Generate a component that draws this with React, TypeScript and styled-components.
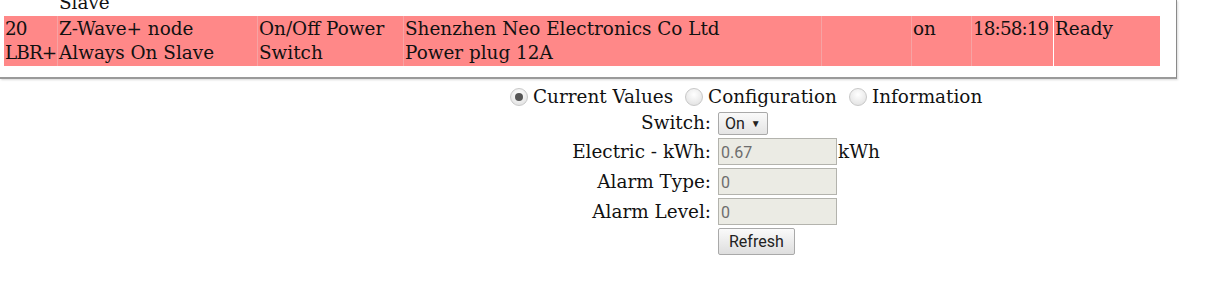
import React from 'react'
import styled, { createGlobalStyle } from 'styled-components'

const GlobalStyle = createGlobalStyle`
  html, body {
    margin: 0;
    padding: 0;
    background: #fff;
  }
  body {
    font-family: 'DejaVu Serif', serif;
    font-size: 18.4px;
    color: #111;
  }
`

const NodeBox = styled.div`
  width: 1177px;
  height: 79px;
  border-right: 1px solid #8a8a8a;
  border-bottom: 2px solid #9a9a9a;
  box-shadow: 1px 1px 2px rgba(0, 0, 0, 0.15);
  overflow: hidden;
  display: flex;
  flex-direction: column;
  justify-content: flex-end;
  padding: 0 16px 11px 3px;
  box-sizing: border-box;
`

const NodeTable = styled.table`
  border-collapse: collapse;
  width: 100%;
  table-layout: fixed;
  line-height: 24px;
`

const Row = styled.tr<{ $alert?: boolean }>`
  background: ${p => (p.$alert ? '#ff8888' : 'transparent')};
`

const Cell = styled.td<{ $w?: number; $line?: boolean; $tight?: boolean }>`
  width: ${p => (p.$w ? `${p.$w - 3}px` : 'auto')};
  padding: 1px 1px;
  vertical-align: top;
  white-space: nowrap;
  overflow: hidden;
  letter-spacing: ${p => (p.$tight ? '-0.9px' : 'normal')};
  border-left: 1px solid ${p => (p.$line ? '#f7a3a3' : 'transparent')};
`

const Panel = styled.div`
  padding: 6px 0 0 510px;
  display: flex;
  flex-direction: column;
`

const Tabs = styled.div`
  display: flex;
  align-items: center;
  gap: 12px;
  line-height: 24px;
  height: 24px;
`

const TabOption = styled.label`
  display: flex;
  align-items: center;
  gap: 5px;
`

const Radio = styled.span<{ $on?: boolean }>`
  width: 18px;
  height: 18px;
  border-radius: 50%;
  box-sizing: border-box;
  border: 1px solid #c8c8c8;
  background: radial-gradient(circle at 50% 35%, #ffffff 0%, #e4e4e4 80%);
  display: flex;
  align-items: center;
  justify-content: center;
  &::after {
    content: '';
    width: 8px;
    height: 8px;
    border-radius: 50%;
    background: ${p => (p.$on ? '#555' : 'transparent')};
  }
`

const FormGrid = styled.div`
  display: grid;
  grid-template-columns: 201px auto;
  column-gap: 7px;
  row-gap: 3px;
  margin-top: 2px;
  align-items: center;
`

const Label = styled.div`
  text-align: right;
  white-space: nowrap;
  line-height: 24px;
`

const Control = styled.div`
  display: flex;
  align-items: center;
  gap: 1px;
`

const Select = styled.div`
  width: 50px;
  height: 23px;
  box-sizing: border-box;
  border: 1px solid #a9a9a9;
  border-radius: 2px;
  background: linear-gradient(#fafafa, #e4e4e4);
  font-family: Roboto, 'Liberation Sans', sans-serif;
  font-size: 16px;
  color: #222;
  display: flex;
  align-items: center;
  padding-left: 6px;
  gap: 6px;
  span {
    font-size: 10px;
  }
`

const ValueInput = styled.input`
  width: 119px;
  height: 27px;
  box-sizing: border-box;
  border: 1px solid #b3b3ad;
  background: #ebebe4;
  color: #6d6d6d;
  font-family: Roboto, 'Liberation Sans', sans-serif;
  font-size: 16px;
  padding: 2px 0 0 2px;
  margin: 0;
`

const Unit = styled.span`
  line-height: 24px;
`

const Button = styled.button`
  height: 27px;
  padding: 0 10px;
  box-sizing: border-box;
  border: 1px solid #a9a9a9;
  border-radius: 2px;
  background: linear-gradient(#fafafa, #dedede);
  font-family: Roboto, 'Liberation Sans', sans-serif;
  font-size: 16px;
  color: #222;
`

const fields = [
  { label: 'Electric - kWh:', value: '0.67', unit: 'kWh' },
  { label: 'Alarm Type:', value: '0' },
  { label: 'Alarm Level:', value: '0' },
]

export default function App() {
  return (
    <>
      <GlobalStyle />
      <NodeBox>
        <NodeTable>
          <tbody>
            <Row>
              <Cell $w={54}></Cell>
              <Cell $w={200}>Slave</Cell>
              <Cell $w={146}></Cell>
              <Cell $w={418}></Cell>
              <Cell $w={90}></Cell>
              <Cell $w={60}></Cell>
              <Cell $w={82}></Cell>
              <Cell></Cell>
            </Row>
            <Row $alert>
              <Cell $w={54} $tight>20<br />LBR+</Cell>
              <Cell $w={200} $line>Z-Wave+ node<br />Always On Slave</Cell>
              <Cell $w={146} $line>On/Off Power<br />Switch</Cell>
              <Cell $w={418} $line>Shenzhen Neo Electronics Co Ltd<br />Power plug 12A</Cell>
              <Cell $w={90} $line></Cell>
              <Cell $w={60} $line>on</Cell>
              <Cell $w={82} $line $tight>18:58:19</Cell>
              <Cell>Ready</Cell>
            </Row>
          </tbody>
        </NodeTable>
      </NodeBox>
      <Panel>
        <Tabs>
          <TabOption><Radio $on />Current Values</TabOption>
          <TabOption><Radio />Configuration</TabOption>
          <TabOption><Radio />Information</TabOption>
        </Tabs>
        <FormGrid>
          <Label>Switch:</Label>
          <Control>
            <Select>On<span>▼</span></Select>
          </Control>
          {fields.map(f => (
            <React.Fragment key={f.label}>
              <Label>{f.label}</Label>
              <Control>
                <ValueInput disabled value={f.value} readOnly />
                {f.unit && <Unit>{f.unit}</Unit>}
              </Control>
            </React.Fragment>
          ))}
          <span />
          <Control>
            <Button>Refresh</Button>
          </Control>
        </FormGrid>
      </Panel>
    </>
  )
}
